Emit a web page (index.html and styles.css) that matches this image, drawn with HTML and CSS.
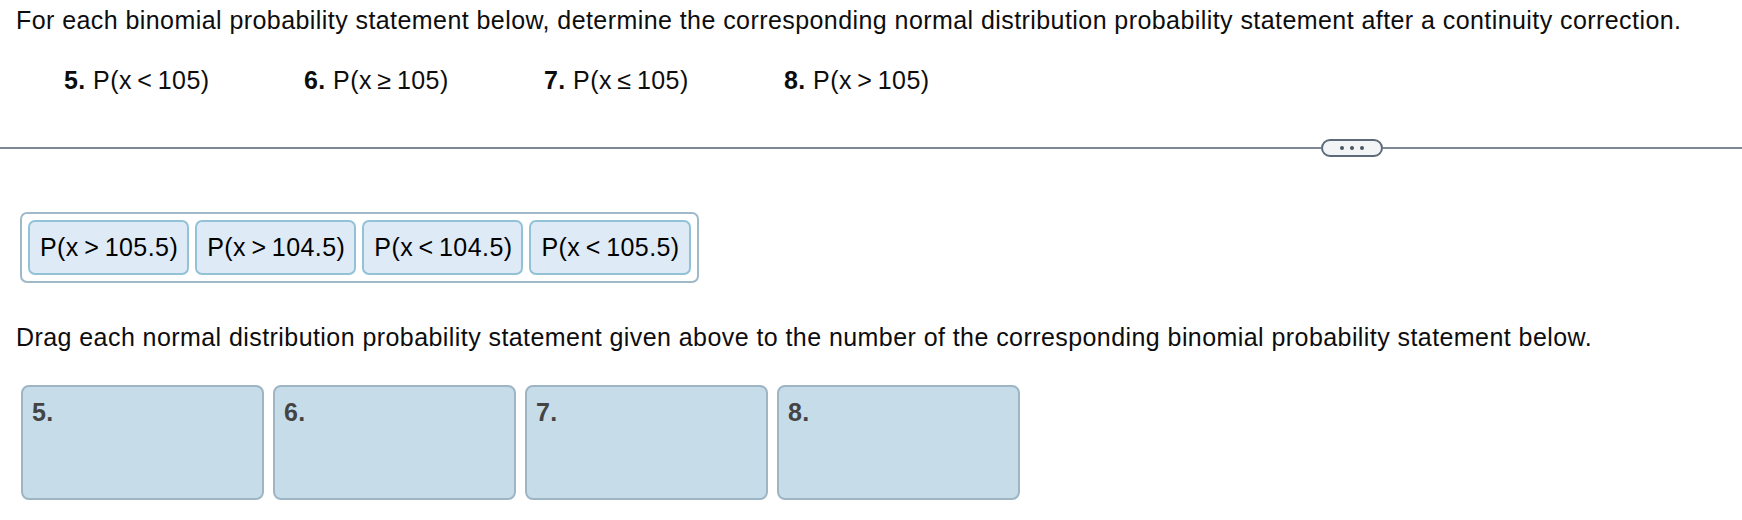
FILE: index.html
```html
<!DOCTYPE html>
<html>
<head>
<meta charset="utf-8">
<link rel="stylesheet" href="styles.css">
</head>
<body>
<div class="page">
  <p class="intro">For each binomial probability statement below, determine the corresponding normal distribution probability statement after a continuity correction.</p>
  <div class="items">
    <div class="item"><b>5.</b> P(x&thinsp;&lt;&thinsp;105)</div>
    <div class="item"><b>6.</b> P(x&thinsp;≥&thinsp;105)</div>
    <div class="item"><b>7.</b> P(x&thinsp;≤&thinsp;105)</div>
    <div class="item"><b>8.</b> P(x&thinsp;&gt;&thinsp;105)</div>
  </div>
</div>
<div class="divider">
  <span class="line"></span>
  <span class="more"><i></i><i></i><i></i></span>
  <span class="line tail"></span>
</div>
<div class="page">
  <div class="bank">
    <div class="chip">P(x&thinsp;&gt;&thinsp;105.5)</div>
    <div class="chip">P(x&thinsp;&gt;&thinsp;104.5)</div>
    <div class="chip">P(x&thinsp;&lt;&thinsp;104.5)</div>
    <div class="chip">P(x&thinsp;&lt;&thinsp;105.5)</div>
  </div>
  <p class="instr">Drag each normal distribution probability statement given above to the number of the corresponding binomial probability statement below.</p>
  <div class="targets">
    <div class="target"><span class="label">5.</span></div>
    <div class="target"><span class="label">6.</span></div>
    <div class="target"><span class="label">7.</span></div>
    <div class="target"><span class="label">8.</span></div>
  </div>
</div>
</body>
</html>
```

FILE: styles.css
```css
html, body {
  margin: 0;
  padding: 0;
  background: #ffffff;
}
body {
  font-family: "Liberation Sans", Arial, sans-serif;
  font-size: 25px;
  line-height: 28px;
  letter-spacing: 0.43px;
  color: #0d0d0d;
}
.page {
  padding: 0 16px;
}
.intro {
  margin: 0;
  padding-top: 6px;
}
.items {
  display: flex;
  margin: 32px 0 0 48px;
}
.item {
  width: 240px;
}
.item b {
  font-weight: bold;
}
.divider {
  display: flex;
  align-items: center;
  margin-top: 45px;
}
.line {
  flex: 1;
  height: 2px;
  background: #7e8995;
}
.line.tail {
  flex: 0 0 359px;
}
.more {
  box-sizing: border-box;
  width: 62px;
  height: 18px;
  border: 2px solid #5d6b79;
  border-radius: 9px;
  background: #f2f4f6;
  display: flex;
  align-items: center;
  justify-content: center;
  gap: 6px;
}
.more i {
  width: 4px;
  height: 4px;
  border-radius: 50%;
  background: #4a5562;
}
.bank {
  display: inline-flex;
  gap: 6px;
  margin: 55px 0 0 4px;
  padding: 6px;
  border: 2px solid #a0b9c8;
  border-radius: 7px;
  background: #ffffff;
}
.chip {
  padding: 11px 9px 12px 10px;
  border: 2px solid #93c1d6;
  border-radius: 7px;
  background: #deebf6;
  line-height: 28px;
  color: #000000;
}
.instr {
  margin: 40px 0 0;
}
.targets {
  display: flex;
  gap: 9px;
  margin: 34px 0 0 5px;
}
.target {
  box-sizing: border-box;
  width: 243px;
  height: 115px;
  padding: 11px 9px;
  border: 2px solid #9db5c5;
  border-radius: 8px;
  background: #c6dde9;
}
.label {
  font-weight: bold;
  color: #444444;
}
```
